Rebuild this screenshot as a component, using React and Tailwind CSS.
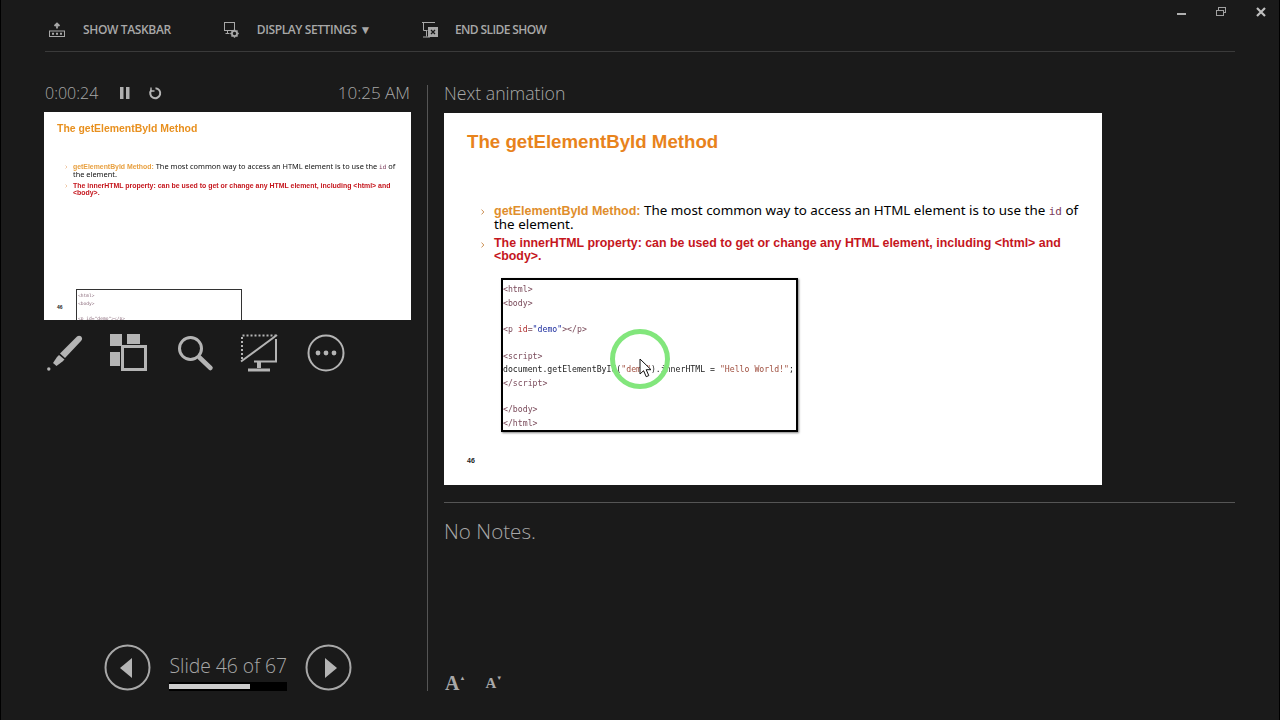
const ui = { fontFamily: '"Open Sans", "Noto Sans", sans-serif' };

function TaskbarIcon() {
  return (
    <svg width="18" height="16" viewBox="0 0 18 16" fill="none" stroke="#a8a8a8">
      <path d="M9 6.5V1.5M6.5 4 9 1.5 11.5 4" strokeWidth="1.8" />
      <rect x="1.5" y="9" width="15" height="5.5" strokeWidth="1" />
      <path d="M4 11.8h2M8 11.8h2M12 11.8h2" strokeWidth="2" />
    </svg>
  );
}

function DisplayIcon() {
  return (
    <svg width="18" height="18" viewBox="0 0 18 18" fill="none" stroke="#a8a8a8">
      <rect x="1.5" y="1.5" width="10" height="8" strokeWidth="1" />
      <path d="M4.5 10v2.5M2.5 12.5h4" strokeWidth="1" />
      <circle cx="11.5" cy="12.5" r="2.6" strokeWidth="1.8" />
      <path d="M11.5 8.2v1.4M11.5 15.4v1.4M7.2 12.5h1.4M14.4 12.5h1.4M8.5 9.5l1 1M13.5 14.5l1 1M8.5 15.5l1-1M13.5 10.5l1-1" strokeWidth="1.4" />
    </svg>
  );
}

function EndShowIcon() {
  return (
    <svg width="18" height="18" viewBox="0 0 18 18" fill="none" stroke="#a8a8a8">
      <path d="M0 1.5h13M1.5 1.5v8h4M4.5 9.5v6M1 16h7" strokeWidth="1" />
      <rect x="6" y="6" width="10" height="10" fill="#a8a8a8" stroke="none" />
      <path d="m9 9 4 4M13 9l-4 4" stroke="#1a1a1a" strokeWidth="1.3" />
    </svg>
  );
}

function PenIcon() {
  return (
    <svg width="38" height="38" viewBox="0 0 38 38" fill="#b4b4b4">
      <path d="M31 2.5c2-1.4 4.5-.4 5 1.4.3 1-.1 2-1 3L19 24l-5-4.5z" />
      <path d="m13 21 5.5 4.5-2 2-6 4.5-3.5-3 4-6z" />
      <circle cx="2.8" cy="35" r="1.7" />
    </svg>
  );
}

function SlidesIcon() {
  return (
    <svg width="38" height="38" viewBox="0 0 38 38" fill="#b4b4b4">
      <rect x="0" y="0" width="12" height="12" />
      <rect x="17" y="0" width="13" height="10" />
      <rect x="0" y="18" width="10" height="14" />
      <rect x="12.5" y="12.5" width="23" height="23" fill="#1a1a1a" stroke="#b4b4b4" strokeWidth="3" />
    </svg>
  );
}

function SearchIcon() {
  return (
    <svg width="38" height="38" viewBox="0 0 38 38" fill="none" stroke="#b4b4b4">
      <circle cx="14.5" cy="14.5" r="11" strokeWidth="3" />
      <path d="m23.5 23.5 11 10.5" strokeWidth="4.5" strokeLinecap="round" />
    </svg>
  );
}

function NoScreenIcon() {
  return (
    <svg width="38" height="38" viewBox="0 0 38 38" fill="none" stroke="#b4b4b4">
      <path d="M2 25V1.5h34" strokeWidth="2" strokeDasharray="2 2" />
      <path d="M36 5v22.5H14" strokeWidth="2" />
      <path d="M1 27.5 37 1" strokeWidth="2" />
      <path d="M19 28v6" strokeWidth="4" />
      <path d="M8 36h22" strokeWidth="3" />
    </svg>
  );
}

function MoreIcon() {
  return (
    <svg width="38" height="38" viewBox="0 0 38 38" fill="none" stroke="#b4b4b4">
      <circle cx="19" cy="19" r="17.5" strokeWidth="2" />
      <circle cx="11" cy="19" r="2.4" fill="#b4b4b4" stroke="none" />
      <circle cx="19" cy="19" r="2.4" fill="#b4b4b4" stroke="none" />
      <circle cx="27" cy="19" r="2.4" fill="#b4b4b4" stroke="none" />
    </svg>
  );
}

function NavButton({ dir }) {
  return (
    <svg className="mt-[1px]" width="47" height="47" viewBox="0 0 47 47" fill="none">
      <circle cx="23.5" cy="23.5" r="22" stroke="#a8a8a8" strokeWidth="2" />
      {dir === "prev" ? <path d="M28 14v20L16 24z" fill="#b4b4b4" /> : <path d="M20 14v20l12-10z" fill="#b4b4b4" />}
    </svg>
  );
}

const serif = { fontFamily: '"Liberation Serif", serif' };

function Bullet({ small }) {
  if (small) {
    return (
      <svg className="mt-[2px] shrink-0" width="3" height="4" viewBox="0 0 3 4" fill="none" stroke="#e8b080" strokeWidth="0.7">
        <path d="m.5.5 1.5 1.5-1.5 1.5" />
      </svg>
    );
  }
  return (
    <svg className="mt-[5px] shrink-0" width="4" height="6" viewBox="0 0 4 6" fill="none" stroke="#c98a4a" strokeWidth="1">
      <path d="m.5.7 2.4 2.3-2.4 2.3" />
    </svg>
  );
}

function MainSlide() {
  const mono = { fontFamily: '"DejaVu Sans Mono", monospace' };
  const code = [
    ["<html>", "text-[#7a4a5a]"],
    ["<body>", "text-[#7a4a5a]"],
    ["", ""],
    ["p", ""],
    ["", ""],
    ["<script>", "text-[#7a4a5a]"],
    ["doc", ""],
    ["</script>", "text-[#7a4a5a]"],
    ["", ""],
    ["</body>", "text-[#7a4a5a]"],
    ["</html>", "text-[#7a4a5a]"],
  ];
  return (
    <div className="relative h-[372px] w-[658px] bg-white pl-[23px] pt-[18px]" style={{ fontFamily: '"Liberation Sans", sans-serif' }}>
      <h2 className="text-[18.7px] font-bold leading-[22px] text-[#e8831c]">The getElementById Method</h2>
      <div className="mt-[51px] pl-[14px]">
        <div className="flex gap-[9px]">
          <Bullet />
          <p className="w-[590px] text-[13.4px] leading-[13px] text-black" style={{ fontFamily: '"Noto Sans", sans-serif' }}>
            <b className="text-[12.5px] font-bold text-[#e08e2c]" style={{ fontFamily: '"Liberation Sans", sans-serif' }}>getElementById Method:</b> The most common way to access an HTML element is to use the <span className="text-[11px] text-[#7a3a5a]" style={mono}>id</span> of the element.
          </p>
        </div>
        <div className="mt-[6px] flex gap-[9px]">
          <Bullet />
          <p className="w-[590px] text-[12.4px] font-bold leading-[13px] text-[#c5161d]">
            The innerHTML property: can be used to get or change any HTML element, including &lt;html&gt; and &lt;body&gt;.
          </p>
        </div>
      </div>
      <div className="ml-[34px] mt-[15px] flex h-[154px] w-[297px] flex-col border-2 border-black pt-[3px] text-[8.2px] leading-[13.5px] shadow-[1px_1px_2px_rgba(0,0,0,0.5)] blur-[0.3px]" style={mono}>
        {code.map(([t, c], i) => {
          if (t === "p") {
            return <div key={i} className="h-[13.5px] whitespace-pre text-[#7a4a5a]">&lt;p <span className="text-[#b03030]">id</span>=<span className="text-[#2030a0]">"demo"</span>&gt;&lt;/p&gt;</div>;
          }
          if (t === "doc") {
            return <div key={i} className="h-[13.5px] whitespace-pre text-[#222]">document.getElementById(<span className="text-[#a05040]">"demo"</span>).innerHTML = <span className="text-[#a05040]">"Hello World!"</span>;</div>;
          }
          return <div key={i} className={`h-[13.5px] whitespace-pre ${c}`}>{t}</div>;
        })}
      </div>
      <div className="mt-[25px] text-[7px] font-bold leading-[8px] text-[#222]">46</div>
      <div className="absolute left-[166px] top-[216px] h-[60px] w-[60px] rounded-full border-[5px] border-[#82e67c]" />
      <svg className="absolute left-[195px] top-[245px]" width="14" height="20" viewBox="0 0 14 20">
        <path d="M1 1v15l3.6-3.3 2.6 6 2.6-1.1-2.6-5.9H12z" fill="#fff" stroke="#111" strokeWidth="1" />
      </svg>
    </div>
  );
}

function Thumb() {
  const mono = { fontFamily: '"DejaVu Sans Mono", monospace' };
  return (
    <div className="relative h-[208px] w-[367px] overflow-hidden bg-white pl-[13px] pt-[10px]" style={{ fontFamily: '"Liberation Sans", sans-serif' }}>
      <h3 className="text-[10.45px] font-bold leading-[13px] text-[#e8901f] blur-[0.3px]">The getElementById Method</h3>
      <div className="mt-[28px] pl-[8px] blur-[0.3px]">
        <div className="flex gap-[5px]">
          <Bullet small />
          <p className="w-[330px] text-[7.4px] leading-[7.5px] text-[#111]" style={{ fontFamily: '"Noto Sans", sans-serif' }}>
            <b className="text-[6.9px] font-bold text-[#e8a040]" style={{ fontFamily: '"Liberation Sans", sans-serif' }}>getElementById Method:</b> The most common way to access an HTML element is to use the <span className="text-[6px] text-[#7a3a5a]" style={mono}>id</span> of the element.
          </p>
        </div>
        <div className="mt-[3.5px] flex gap-[5px]">
          <Bullet small />
          <p className="w-[330px] text-[6.95px] font-bold leading-[7.5px] text-[#c5161d]">
            The innerHTML property: can be used to get or change any HTML element, including &lt;html&gt; and &lt;body&gt;.
          </p>
        </div>
      </div>
      <span className="absolute left-[13px] top-[192px] text-[5px] font-bold leading-[6px] text-[#222]">46</span>
      <div className="absolute left-[32px] top-[177px] h-[40px] w-[166px] border border-[#333] pl-[1px] pt-[2px] text-[4.6px] leading-[7.7px] text-[#8a6a7a] blur-[0.3px]" style={mono}>
        <div>&lt;html&gt;</div>
        <div>&lt;body&gt;</div>
        <div className="mt-[7.7px]">&lt;p id="demo"&gt;&lt;/p&gt;</div>
      </div>
    </div>
  );
}

function ToolbarItem({ icon, label, gap, tracking }) {
  return (
    <div className={`flex items-center ${gap}`}>
      {icon}
      <span className={`text-[12px] font-semibold text-[#a8a8a8] ${tracking}`}>{label}</span>
    </div>
  );
}

export default function App() {
  return (
    <div className="relative flex h-[720px] w-[1280px] flex-col overflow-hidden border-x border-black bg-[#1a1a1a]" style={ui}>
      {/* window controls */}
      <div className="absolute right-[12px] top-[6px] flex items-start gap-[28px]">
        <svg width="12" height="12" viewBox="0 0 12 12" className="-mr-[1px]"><path d="M1 8h9" stroke="#b0b0b0" strokeWidth="2" /></svg>
        <svg width="12" height="12" viewBox="0 0 12 12" fill="#1a1a1a" stroke="#a0a0a0"><rect x="3.5" y="1.5" width="7" height="5" /><rect x="1.5" y="4.5" width="7" height="5" /></svg>
        <svg width="12" height="12" viewBox="0 0 12 12"><path d="m2 2 8 8M10 2l-8 8" stroke="#c0c0c0" strokeWidth="2.2" /></svg>
      </div>

      {/* toolbar */}
      <div className="mx-[44px] flex h-[52px] shrink-0 items-center border-b border-[#3a3a3a] pl-[3px] pt-[9px]">
        <ToolbarItem icon={<TaskbarIcon />} label="SHOW TASKBAR" gap="gap-[17px]" tracking="tracking-[-0.35px]" />
        <div className="ml-[52px]">
          <ToolbarItem icon={<DisplayIcon />} label="DISPLAY SETTINGS ▼" gap="gap-[16px]" tracking="tracking-[-0.4px]" />
        </div>
        <div className="ml-[51px]">
          <ToolbarItem icon={<EndShowIcon />} label="END SLIDE SHOW" gap="gap-[15px]" tracking="tracking-[-0.6px]" />
        </div>
      </div>

      <div className="mt-[33px] flex h-[606px]">
        {/* left column */}
        <div className="flex w-[427px] flex-col border-r border-[#555] pl-[43px] pr-[16px]">
          <div className="flex h-[27px] items-center pb-[11px] text-[17px] leading-[16px] text-[#a8a8a8]">
            <span className="ml-[1px] text-[16px] font-light">0:00:24</span>
            <svg className="ml-[21px]" width="12" height="14" viewBox="0 0 12 14" fill="#b0b0b0"><rect x="1" y="1" width="3.5" height="12" /><rect x="7" y="1" width="3.5" height="12" /></svg>
            <svg className="ml-[17px]" width="14" height="14" viewBox="0 0 14 14" fill="none" stroke="#b4b4b4" strokeWidth="2"><path d="M7.5 2.2A5 5 0 1 1 3.4 4" /><path d="M3 1.5V5h3.5" strokeWidth="1.4" /></svg>
            <span className="ml-auto mr-[1px] font-light">10:25 AM</span>
          </div>
          <Thumb />
          <div className="mt-[14px] flex items-center pl-[2px]">
            <PenIcon />
            <div className="ml-[26px]"><SlidesIcon /></div>
            <div className="ml-[28px]"><SearchIcon /></div>
            <div className="ml-[26px]"><NoScreenIcon /></div>
            <div className="ml-[29px]"><MoreIcon /></div>
          </div>
          <div className="mt-auto flex items-start justify-center gap-[18px]">
            <NavButton dir="prev" />
            <div className="w-[118px]">
              <div className="h-[39px] whitespace-nowrap pl-[1px] text-[19.3px] font-light leading-[46px] text-[#a8a8a8]">Slide 46 of 67</div>
              <div className="h-[9px] bg-black pt-[2px]">
                <div className="h-[5px] w-[81px] bg-[#cccccc]" />
              </div>
            </div>
            <NavButton dir="next" />
          </div>
        </div>

        {/* right column */}
        <div className="flex w-[807px] flex-col pl-[16px]">
          <div className="h-[28px] text-[17.7px] font-light leading-[16px] text-[#a8a8a8]">Next animation</div>
          <MainSlide />
          <div className="mt-[17px] border-t border-[#555] pt-[16px] text-[20.6px] font-light leading-[24px] text-[#a8a8a8]">No Notes.</div>
          <div className="-mb-[1px] mt-auto flex items-end gap-[26px] pl-[1px]" style={serif}>
            <span className="relative text-[20px] font-bold leading-[18px] text-[#a8a8a8]">A<span className="absolute -right-[6px] top-[1px] text-[6px] leading-[6px]">▲</span></span>
            <span className="relative text-[15px] font-bold leading-[18px] text-[#a8a8a8]">A<span className="absolute -right-[6px] top-[1px] text-[6px] leading-[6px]">▼</span></span>
          </div>
        </div>
      </div>
    </div>
  );
}
